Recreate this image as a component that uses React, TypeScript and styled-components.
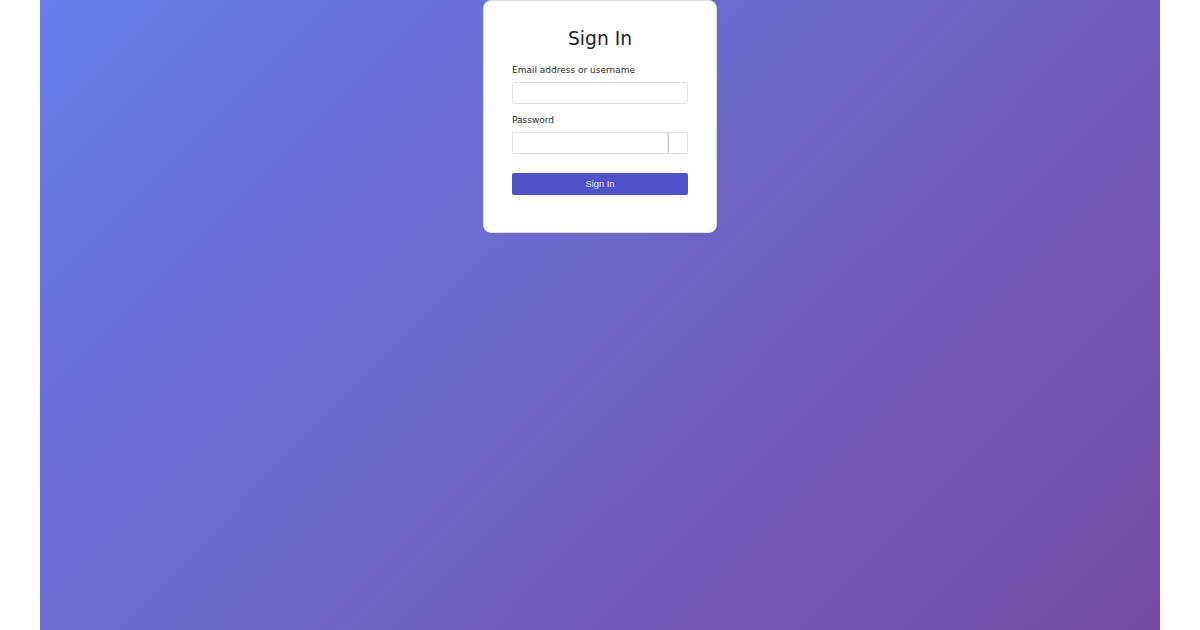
import React from "react";
import styled, { createGlobalStyle } from "styled-components";

const GlobalStyle = createGlobalStyle`
  html, body {
    margin: 0;
    padding: 0;
    background: #ffffff;
  }
  * {
    box-sizing: border-box;
  }
`;

export default function App() {
  return (
    <>
      <GlobalStyle />
      <Page>
        <Card>
          <Title>Sign In</Title>
          <Field>
            <Label htmlFor="login">Email address or username</Label>
            <TextInput id="login" type="text" />
          </Field>
          <Field>
            <Label htmlFor="password">Password</Label>
            <InputGroup>
              <TextInput id="password" type="password" />
              <RevealButton type="button" aria-label="Show password" />
            </InputGroup>
          </Field>
          <SubmitButton type="submit">Sign In</SubmitButton>
        </Card>
      </Page>
    </>
  );
}

const Page = styled.div`
  width: 1120px;
  min-height: 630px;
  margin: 0 auto;
  background: linear-gradient(135deg, #667eea 0%, #764ba2 100%);
  display: flex;
  flex-direction: column;
  align-items: center;
`;

const Card = styled.form`
  width: 234px;
  background: #ffffff;
  border: 1px solid #dcdcdc;
  border-radius: 8px;
  padding: 27px 28px 37px;
  display: flex;
  flex-direction: column;
  font-family: "DejaVu Sans", sans-serif;
  color: #222222;
`;

const Title = styled.h1`
  margin: 0 0 14px;
  font-size: 18.7px;
  line-height: 22px;
  font-weight: 400;
  text-align: center;
  color: #222222;
`;

const Field = styled.div`
  display: flex;
  flex-direction: column;
  gap: 6px;
  margin-bottom: 10px;
  &:last-of-type {
    margin-bottom: 19px;
  }
`;

const Label = styled.label`
  font-size: 9px;
  line-height: 12px;
  color: #2a2a2a;
`;

const InputGroup = styled.div`
  display: flex;
`;

const TextInput = styled.input`
  display: block;
  width: 100%;
  min-width: 0;
  height: 22px;
  border: 1px solid #e2e2e2;
  border-radius: 2px;
  padding: 0 6px;
  font-size: 10px;
  font-family: "DejaVu Sans", sans-serif;
  outline: none;
  ${InputGroup} & {
    flex: 1 1 auto;
    border-radius: 2px 0 0 2px;
  }
`;

const RevealButton = styled.button`
  width: 20px;
  height: 22px;
  flex: 0 0 20px;
  border: 1px solid #e2e2e2;
  border-left-color: #cfcfcf;
  border-radius: 0 2px 2px 0;
  background: #ffffff;
  padding: 0;
`;

const SubmitButton = styled.button`
  height: 22px;
  border: none;
  border-radius: 2px;
  background: #4f53c8;
  color: #e8e8f8;
  font-family: "Liberation Sans", Arial, sans-serif;
  font-size: 9.3px;
  cursor: pointer;
`;
